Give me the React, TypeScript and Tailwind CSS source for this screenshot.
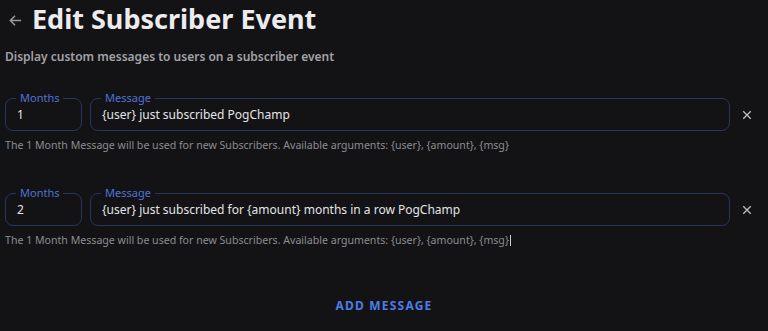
import React from "react";

interface MessageRowProps {
  months: string;
  message: string;
  caret?: boolean;
}

function OutlinedField({
  label,
  value,
  className,
}: {
  label: string;
  value: string;
  className?: string;
}) {
  return (
    <div
      className={`relative flex h-[33px] items-center rounded-lg border border-[#27355f] pl-[11px] ${className ?? ""}`}
    >
      {/* notched label sitting on the border */}
      <span className="absolute -top-[8px] left-[10px] bg-[#131316] px-[4px] text-[11px] leading-[13px] text-[#4f74d4]">
        {label}
      </span>
      <span className="text-[12px] leading-5 text-[#e4e4e6]">{value}</span>
    </div>
  );
}

function MessageRow({ months, message, caret }: MessageRowProps) {
  return (
    <div className="flex flex-col">
      <div className="flex items-center">
        <OutlinedField label="Months" value={months} className="w-[77px] shrink-0" />
        <OutlinedField label="Message" value={message} className="ml-2 flex-1" />
        <button className="ml-[5px] mr-[9px] flex h-6 w-6 items-center justify-center text-[#bdbdbd]">
          <svg width="10" height="10" viewBox="0 0 12 12" fill="none" stroke="currentColor" strokeWidth={1.6}>
            <path d="M1.5 1.5l9 9M10.5 1.5l-9 9" />
          </svg>
        </button>
      </div>
      <p className="mt-[6px] text-[10.6px] leading-4 text-[#8c8c90]">
        The 1 Month Message will be used for new Subscribers. Available arguments: {"{user}"}, {"{amount}"}, {"{msg}"}
        {caret && <span className="ml-px inline-block h-[11px] w-px translate-y-[2px] bg-[#d0d0d0]" />}
      </p>
    </div>
  );
}

export default function App() {
  return (
    <div
      className="h-[331px] w-[768px] overflow-hidden bg-[#131316] pl-[5px]"
      style={{ fontFamily: "'Noto Sans', 'Open Sans', sans-serif" }}
    >
      <div className="flex items-center pt-[1px]">
        <svg width="15" height="15" viewBox="0 0 16 16" fill="none" stroke="#9a9a9e" strokeWidth={1.6} className="ml-[3px] mt-[3px]">
          <path d="M14 8H2.5M7.5 3L2.5 8l5 5" />
        </svg>
        <h1 className="ml-[9px] text-[27px] font-bold leading-[36px] text-[#ececee]">
          Edit Subscriber Event
        </h1>
      </div>
      <p className="mt-[12px] text-[12px] font-semibold leading-4 text-[#a2a2a6]">
        Display custom messages to users on a subscriber event
      </p>

      <div className="mt-[33px] flex flex-col gap-[40px]">
        <MessageRow months="1" message="{user} just subscribed PogChamp" />
        <MessageRow
          months="2"
          message="{user} just subscribed for {amount} months in a row PogChamp"
          caret
        />
      </div>

      <div className="mt-[50px] flex justify-center pr-[5px]">
        <button className="text-[12px] font-bold leading-4 tracking-[0.1em] text-[#4d7ce6]">
          ADD MESSAGE
        </button>
      </div>
    </div>
  );
}
